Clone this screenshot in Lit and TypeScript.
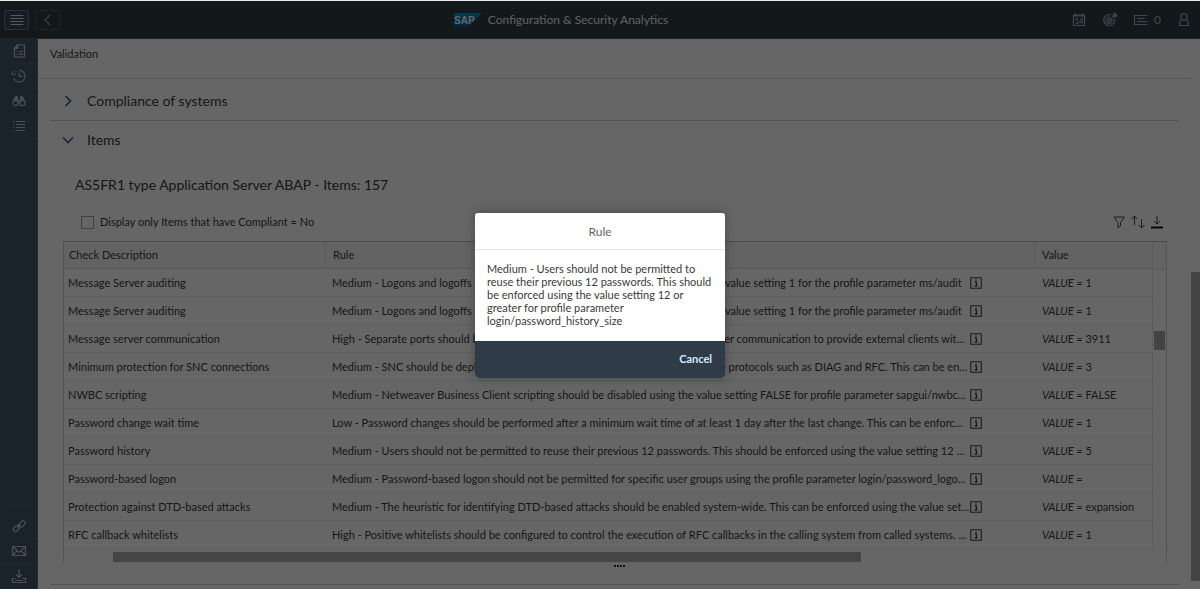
import { LitElement, html, css, svg } from "lit";
import { customElement, state } from "lit/decorators.js";

interface CheckItem {
  check: string;
  rule: string;
  value: string;
}

const ITEMS: CheckItem[] = [
  { check: "Message Server auditing", rule: "Medium - Logons and logoffs of all application servers should be logged using the value setting 1 for the profile parameter ms/audit", value: "1" },
  { check: "Message Server auditing", rule: "Medium - Logons and logoffs of all application servers should be logged using the value setting 1 for the profile parameter ms/audit", value: "1" },
  { check: "Message server communication", rule: "High - Separate ports should be configured for internal and external message server communication to provide external clients wit...", value: "3911" },
  { check: "Minimum protection for SNC connections", rule: "Medium - SNC should be deployed to secure all network connections that use the protocols such as DIAG and RFC. This can be en...", value: "3" },
  { check: "NWBC scripting", rule: "Medium - Netweaver Business Client scripting should be disabled using the value setting FALSE for profile parameter sapgui/nwbc...", value: "FALSE" },
  { check: "Password change wait time", rule: "Low - Password changes should be performed after a minimum wait time of at least 1 day after the last change. This can be enforc...", value: "1" },
  { check: "Password history", rule: "Medium - Users should not be permitted to reuse their previous 12 passwords. This should be enforced using the value setting 12 ...", value: "5" },
  { check: "Password-based logon", rule: "Medium - Password-based logon should not be permitted for specific user groups using the profile parameter login/password_logo...", value: "" },
  { check: "Protection against DTD-based attacks", rule: "Medium - The heuristic for identifying DTD-based attacks should be enabled system-wide. This can be enforced using the value set...", value: "expansion" },
  { check: "RFC callback whitelists", rule: "High - Positive whitelists should be configured to control the execution of RFC callbacks in the calling system from called systems. ...", value: "1" },
];

const icons = {
  menu: svg`<path d="M1.500 3.500h13M1.500 6.500h13M1.500 9.500h13M1.500 12.500h13"/>`,
  back: svg`<path d="M10.500 2.500 5 8l5.500 5.500"/>`,
  document: svg`<path d="M6.500 2h7v12h-10V5.500zM6.500 2v3.500h-3M5.500 8.500h1M8 8.500h4M5.500 11.200h1M8 11.200h4"/><path d="M3.500 5.500l3-3.500v3.500z" fill="currentColor"/>`,
  history: svg`<path d="M4 4.400a5.800 5.800 0 0 1 1.500-1.300M8 2.300a5.800 5.800 0 1 1-5.300 7.800M8.300 5v3.500h3M1.300 3.500v3h3.500"/>`,
  binoculars: svg`<circle cx="4.500" cy="10" r="2.700"/><circle cx="11.500" cy="10" r="2.700"/><path d="M2.300 8 4.500 3.500h2L7.300 9h1.400l.8-5.500h2L13.700 8l-2-1-2.500 1.500H6.800L4.300 7z" fill="currentColor" stroke-width=".7"/>`,
  list: svg`<path d="M5 3.500h9M5 6.500h9M5 9.500h9M5 12.500h9M2.500 3.500h1M2.500 6.500h1M2.500 9.500h1M2.500 12.500h1"/>`,
  link: svg`<rect x="7.600" y="3.800" width="7" height="4.200" rx="2.100" transform="rotate(-45 11.100 5.900)"/><rect x="1.800" y="8.400" width="7" height="4.200" rx="2.100" transform="rotate(-45 5.300 10.500)"/><path d="M6.300 9.700l3.400-3.400"/>`,
  mail: svg`<path d="M1.500 3.500h13v9h-13zM1.500 3.500 8 9.500l6.500-6M1.500 12.500l4.700-4.800M14.500 12.500 9.800 7.700"/>`,
  install: svg`<path d="M8 1v8M5 6.500l3 3 3-3M4.500 10.500h-3v4h13v-4h-3M4 12.500h8"/>`,
  calendar: svg`<path d="M2.500 3h11v10.500h-11zM2.500 4h11M4.500 1.500v2M11.500 1.500v2"/><text x="8" y="11.800" text-anchor="middle" font-size="7.500" font-weight="700" fill="currentColor" stroke="none">14</text>`,
  target: svg`<path d="M12.400 6.200a5.500 5.500 0 1 1-3-3.200M9.800 7.300a3 3 0 1 1-1.900-1.700"/><circle cx="7" cy="8.500" r=".8" fill="currentColor"/><path d="M7 8.500 14 2M11.500 4.300V2l1.500-1v2h2l-1.200 1.500z"/>`,
  news: svg`<path d="M4 12.500H1.500v-9h13M4 6.500h7.500M4 9.500h10.500M4 12.500h10.500" stroke-width="1.100"/>`,
  person: svg`<circle cx="8" cy="5" r="3.200"/><path d="M5.800 7.500C4 8.500 3.500 10 3.500 13.500h9C12.500 10 12 8.500 10.200 7.500"/>`,
  chevronRight: svg`<path d="M5.500 3l5 5-5 5" stroke-width="1.700"/>`,
  chevronDown: svg`<path d="M3 5.500l5 5 5-5" stroke-width="1.700"/>`,
  filter: svg`<path d="M3 3h10.500L9.500 8.500v3.500l-2.500 1.500V8.500z" stroke-width="1"/>`,
  sort: svg`<path d="M4.500 11V2M1.700 5l2.800-3 2.800 3M11.500 5v9M8.700 11l2.800 3 2.800-3" stroke-width="1"/>`,
  download: svg`<path d="M8 2v8M5 7l3 3 3-3" stroke-width="1"/><path d="M2 13.500h12" stroke-width="1.800" stroke="#000"/>`,
  info: svg`<path d="M2 2h12v12H2z" stroke-width="1.200"/><path d="M6.500 7h2v4M6.300 11.200h3.600M8 4v1.600" stroke-width="1.500"/>`,
};

const icon = (name: keyof typeof icons) =>
  html`<svg class="icon" viewBox="0 0 16 16" aria-hidden="true">${icons[name]}</svg>`;

@customElement("app-root")
export class AppRoot extends LitElement {
  @state() private dialogOpen = true;

  static styles = css`
    :host {
      display: flex;
      flex-direction: column;
      height: 100vh;
      overflow: hidden;
      position: relative;
      border-top: 1px solid #eceeee;
      box-sizing: border-box;
      font: 11px/14px Lato, "Liberation Sans", sans-serif;
      color: #3a3a3a;
      background: #fff;
    }
    * { box-sizing: border-box; }
    button {
      font: inherit;
      color: inherit;
      background: none;
      border: 0;
      padding: 0;
      display: inline-flex;
      align-items: center;
      justify-content: center;
      cursor: pointer;
    }
    .icon {
      width: 16px;
      height: 16px;
      flex: none;
      fill: none;
      stroke: currentColor;
      stroke-width: 1.2;
    }
    .shell {
      display: grid;
      grid-template-columns: 1fr auto 1fr;
      align-items: center;
      height: 38px;
      flex: none;
      padding: 0 8px 0 4px;
      background: #303d44;
      border-bottom: 1px solid #56606a;
    }
    .nav { display: flex; gap: 6px; }
    .nav button {
      width: 25px;
      height: 20px;
      border: 1px solid #6c7b8a;
      border-radius: 2px;
      background: #35475a;
      color: #d1e0ee;
    }
    .nav .back { border-color: #4d5a66; background: none; color: #8996a3; }
    .brand { display: flex; align-items: center; gap: 6px; margin-right: 74px; }
    .logo { width: 28px; height: 14px; }
    .brand h1 { margin: 0; font-size: 12px; line-height: 16px; font-weight: 400; color: #eee; }
    .tools { display: flex; justify-content: flex-end; align-items: center; gap: 15px; color: #9baec5; }
    .tools .count { gap: 5px; font-size: 12px; }
    .body { display: flex; flex: 1; min-height: 0; }
    .side {
      width: 38px;
      flex: none;
      display: flex;
      flex-direction: column;
      justify-content: space-between;
      background: #415569;
      border-right: 1px solid #5d6b7b;
      color: #b9c8d6;
    }
    .side ul { list-style: none; margin: 0; padding: 0; }
    .side .bottom { display: flex; flex-direction: column; align-items: center; }
    .side .bottom::before { content: ""; width: 25px; height: 1px; background: #1d5c8f; margin-bottom: 2px; }
    .side li { width: 100%; }
    .side button { width: 100%; height: 25px; border-bottom: 1px solid #4c5f73; }
    .main { flex: 1; min-width: 0; display: flex; }
    .page { flex: 1; min-width: 0; }
    .page-head { height: 40px; padding: 8px 12px; border-bottom: 1px solid #dcdcdc; }
    .panels { padding: 3px 12px 0; }
    .panel-head { width: 100%; height: 38px; justify-content: flex-start; gap: 11px; padding-left: 10px; font-size: 14px; }
    .panel-head .icon { color: #346187; }
    .panel { border-bottom: 1px solid #cfcfcf; }
    .panel h2 { margin: 0; font-weight: 400; }
    .content { padding: 0 12px 17px 13px; }
    .content h3 { margin: 0; padding: 17px 12px 18px; font-size: 14px; line-height: 18px; font-weight: 400; }
    .bar { display: flex; justify-content: space-between; align-items: center; height: 29px; padding: 0 2px 9px 18px; }
    .bar label { display: flex; align-items: center; gap: 6px; }
    .bar input { appearance: none; width: 13px; height: 13px; margin: 0; border: 1px solid #a4a4a4; }
    .bar .actions { display: flex; gap: 3px; color: #444; }
    .grid { display: flex; border: 1px solid #d0d0d0; border-top-color: #bcbcbc; border-bottom: 0; }
    table { flex: 1; min-width: 0; border-collapse: separate; border-spacing: 0; table-layout: fixed; }
    .c-check { width: 262px; }
    .c-value { width: 118px; }
    th {
      height: 27px;
      padding: 0 7px 0 5px;
      font-weight: 400;
      text-align: left;
      background: #f7f7f7;
      border-right: 1px solid #e0e0e0;
      border-bottom: 1px solid #e0e0e0;
    }
    td { height: 28px; padding: 0 4px; border-bottom: 1px solid #eaeaea; white-space: nowrap; }
    th + th { padding-left: 7px; }
    td + td { padding-left: 6px; }
    td:last-child { padding-left: 7px; border-right: 1px solid #e5e5e5; }
    .rule { display: flex; align-items: center; }
    .rule span { flex: 0 1 637px; min-width: 0; }
    .rule .icon { width: 14px; height: 14px; }
    .track { width: 13px; flex: none; display: flex; flex-direction: column; }
    .track::before { content: ""; height: 27px; background: #f7f7f7; border-bottom: 1px solid #e0e0e0; }
    .track .thumb { width: 11px; height: 19px; margin: 61px 0 0 1px; background: #a9a9a9; }
    .hscroll { padding: 3px 305px 0 49px; border: solid #d8d8d8; border-width: 0 1px; height: 14px; }
    .hscroll div { height: 10px; background: #acacac; }
    .grip { display: flex; justify-content: center; gap: 1px; padding: 2px 0 0 8px; }
    .grip i { width: 2px; height: 2px; background: #333; }
    .pagescroll { width: 9px; flex: none; padding-top: 233px; }
    .pagescroll div { height: 309px; background: #aaa; }
    .overlay {
      position: absolute;
      inset: 0;
      display: grid;
      place-items: center;
      background: rgba(0, 0, 0, 0.6);
    }
    .dialog {
      width: 250px;
      border-radius: 3px;
      overflow: hidden;
      background: #fff;
      box-shadow: 0 0 12px rgba(0, 0, 0, 0.3);
    }
    .dialog h2 {
      margin: 0;
      padding: 11px 12px 9px;
      font-size: 12px;
      line-height: 16px;
      font-weight: 400;
      text-align: center;
      color: #666;
      border-bottom: 1px solid #e5e5e5;
    }
    .dialog p { margin: 0; padding: 12px 12px 14px; line-height: 13px; }
    .dialog footer { display: flex; justify-content: flex-end; padding: 11px 13px 12px; background: #2f3c48; }
    .dialog footer button { color: #d1e8ff; font-weight: 700; }
  `;

  private sideItems(names: (keyof typeof icons)[], cls: string) {
    return html`<ul class=${cls}>
      ${names.map((n) => html`<li><button aria-label=${n}>${icon(n)}</button></li>`)}
    </ul>`;
  }

  render() {
    return html`
      <header class="shell">
        <div class="nav">
          <button aria-label="Menu">${icon("menu")}</button>
          <button class="back" aria-label="Back">${icon("back")}</button>
        </div>
        <div class="brand">
          <svg class="logo" viewBox="0 0 28 14" role="img" aria-label="SAP">
            <defs>
              <linearGradient id="g" x1="0" y1="0" x2="0" y2="1">
                <stop offset="0" stop-color="#0091cc" />
                <stop offset="1" stop-color="#0a5a9c" />
              </linearGradient>
            </defs>
            <path d="M0 0h28L14 14H0z" fill="url(#g)" />
            <text x="0" y="11" font-family="Liberation Sans" font-size="10" font-weight="700" fill="#fff">SAP</text>
          </svg>
          <h1>Configuration &amp; Security Analytics</h1>
        </div>
        <div class="tools">
          <button aria-label="Calendar">${icon("calendar")}</button>
          <button aria-label="Goals">${icon("target")}</button>
          <button class="count" aria-label="Messages">${icon("news")}<span>0</span></button>
          <button aria-label="User">${icon("person")}</button>
        </div>
      </header>
      <div class="body">
        <nav class="side">
          ${this.sideItems(["document", "history", "binoculars", "list"], "top")}
          ${this.sideItems(["link", "mail", "install"], "bottom")}
        </nav>
        <main class="main">
          <div class="page">
            <div class="page-head">Validation</div>
            <div class="panels">
              <section class="panel">
                <h2><button class="panel-head" aria-expanded="false">${icon("chevronRight")}Compliance of systems</button></h2>
              </section>
              <section class="panel">
                <h2><button class="panel-head" aria-expanded="true">${icon("chevronDown")}Items</button></h2>
                <div class="content">
                  <h3>AS5FR1 type Application Server ABAP - Items: 157</h3>
                  <div class="bar">
                    <label><input type="checkbox" />Display only Items that have Compliant = No</label>
                    <div class="actions">
                      <button aria-label="Filter">${icon("filter")}</button>
                      <button aria-label="Sort">${icon("sort")}</button>
                      <button aria-label="Download">${icon("download")}</button>
                    </div>
                  </div>
                  <div class="grid">
                    <table>
                      <colgroup><col class="c-check" /><col /><col class="c-value" /></colgroup>
                      <thead>
                        <tr><th scope="col">Check Description</th><th scope="col">Rule</th><th scope="col">Value</th></tr>
                      </thead>
                      <tbody>
                        ${ITEMS.map(
                          (r) => html`<tr>
                            <td>${r.check}</td>
                            <td>
                              <div class="rule">
                                <span>${r.rule}</span>
                                <button aria-label="Show rule" @click=${() => (this.dialogOpen = true)}>${icon("info")}</button>
                              </div>
                            </td>
                            <td><em>VALUE =</em> ${r.value}</td>
                          </tr>`
                        )}
                      </tbody>
                    </table>
                    <div class="track"><div class="thumb"></div></div>
                  </div>
                  <div class="hscroll"><div></div></div>
                  <div class="grip"><i></i><i></i><i></i><i></i></div>
                </div>
              </section>
            </div>
          </div>
          <div class="pagescroll"><div></div></div>
        </main>
      </div>
      ${this.dialogOpen
        ? html`<div class="overlay">
            <div class="dialog" role="dialog" aria-modal="true" aria-labelledby="dlg-title">
              <h2 id="dlg-title">Rule</h2>
              <p>
                Medium - Users should not be permitted to reuse their previous 12 passwords. This should be enforced
                using the value setting 12 or greater for profile parameter login/password_history_size
              </p>
              <footer><button @click=${() => (this.dialogOpen = false)}>Cancel</button></footer>
            </div>
          </div>`
        : ""}
    `;
  }
}
